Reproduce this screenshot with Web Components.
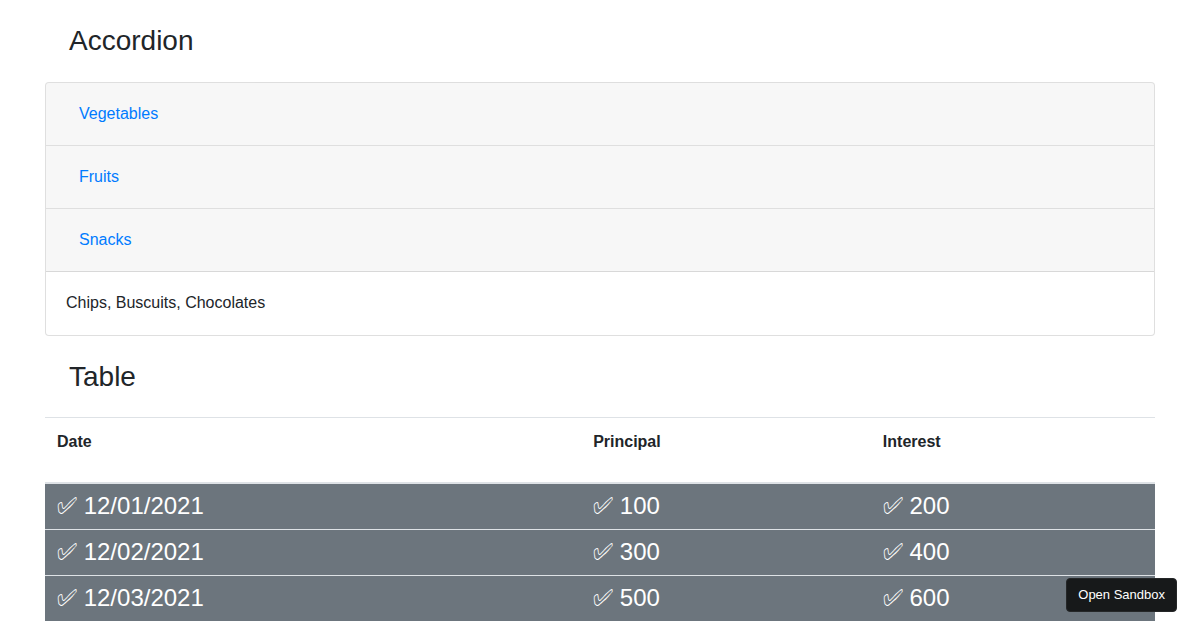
<!DOCTYPE html>
<html lang="en">
<head>
<meta charset="utf-8">
<meta name="viewport" content="width=device-width, initial-scale=1">
<title>Accordion and Table</title>
<style>
  body {
    margin: 0;
    background: #fff;
    color: #212529;
    font: 16px/24px "Liberation Sans", Arial, "DejaVu Sans", sans-serif;
  }
</style>
</head>
<body>
<demo-page>
  <section-title>Accordion</section-title>
  <accordion-group>
    <accordion-card label="Vegetables">Tomato, Potato, Onion</accordion-card>
    <accordion-card label="Fruits">Apple, Mango, Orange</accordion-card>
    <accordion-card label="Snacks" open>Chips, Buscuits, Chocolates</accordion-card>
  </accordion-group>
  <section-title>Table</section-title>
  <payment-table></payment-table>
</demo-page>
<sandbox-button>Open Sandbox</sandbox-button>

<script>
  const attach = (el, html) => {
    el.attachShadow({ mode: "open" }).innerHTML = html;
    return el.shadowRoot;
  };

  customElements.define("demo-page", class extends HTMLElement {
    constructor() {
      super();
      attach(this, `
        <style>
          :host { display: block; box-sizing: border-box; max-width: 1140px; margin: 0 auto; padding: 0 15px; }
        </style>
        <main><slot></slot></main>`);
    }
  });

  customElements.define("section-title", class extends HTMLElement {
    constructor() {
      super();
      attach(this, `
        <style>
          :host { display: block; padding: 24px; }
          h3 { margin: 0; font-size: 28px; font-weight: 500; line-height: 1.2; }
        </style>
        <h3><slot></slot></h3>`);
    }
  });

  customElements.define("accordion-group", class extends HTMLElement {
    constructor() {
      super();
      attach(this, `
        <style>
          :host { display: block; }
          ::slotted(:first-child) { border-radius: 4px 4px 0 0; }
          ::slotted(:last-child) { border-radius: 0 0 4px 4px; }
        </style>
        <slot></slot>`);
    }
  });

  customElements.define("accordion-card", class extends HTMLElement {
    static observedAttributes = ["open"];
    constructor() {
      super();
      const root = attach(this, `
        <style>
          :host { display: block; overflow: hidden; border-width: 1px; border-style: solid; border-color: rgba(0,0,0,.125); background: #fff; }
          :host(:not(:last-child)) { border-bottom-width: 0; }
          header { padding: 12px 20px; margin-bottom: -1px; background: rgba(0,0,0,.03); border-bottom: 1px solid rgba(0,0,0,.125); }
          button { display: block; padding: 6px 12px; border: 1px solid transparent; background: none; color: #007bff; font: inherit; cursor: pointer; }
          button:hover { color: #0056b3; text-decoration: underline; }
          .body { padding: 20px; }
        </style>
        <header><button type="button" aria-controls="body"></button></header>
        <div class="body" id="body"><slot></slot></div>`);
      root.querySelector("button").addEventListener("click", () => {
        const wasOpen = this.hasAttribute("open");
        for (const card of this.parentElement.children) card.removeAttribute("open");
        this.toggleAttribute("open", !wasOpen);
      });
    }
    connectedCallback() {
      this.shadowRoot.querySelector("button").textContent = this.getAttribute("label");
      this.update();
    }
    attributeChangedCallback() { this.update(); }
    update() {
      const open = this.hasAttribute("open");
      this.shadowRoot.querySelector("button").setAttribute("aria-expanded", open);
      this.shadowRoot.querySelector(".body").hidden = !open;
    }
  });

  customElements.define("payment-table", class extends HTMLElement {
    constructor() {
      super();
      const rows = [["12/01/2021", 100, 200], ["12/02/2021", 300, 400], ["12/03/2021", 500, 600]];
      attach(this, `
        <style>
          :host { display: block; }
          table { width: 100%; border-collapse: collapse; table-layout: fixed; }
          th { box-sizing: border-box; padding: 12px 12px 28px; border-top: 1px solid #dee2e6; border-bottom: 2px solid #dee2e6; text-align: left; font-weight: 700; }
          th:nth-child(1) { width: 48.3%; }
          th:nth-child(2) { width: 26.1%; }
          tbody { background: #6c757d; color: #fff; }
          td { box-sizing: border-box; height: 46px; padding: 4px 12px; border-top: 1px solid #dee2e6; font-size: 24px; line-height: 36px; }
          .mark { font-family: "DejaVu Sans", sans-serif; font-variant-emoji: text; line-height: 1; }
        </style>
        <table>
          <thead><tr><th scope="col">Date</th><th scope="col">Principal</th><th scope="col">Interest</th></tr></thead>
          <tbody>${rows.map(r => `<tr>${r.map(c => `<td><span class="mark">✅&#xFE0E;</span> ${c}</td>`).join("")}</tr>`).join("")}</tbody>
        </table>`);
    }
  });

  customElements.define("sandbox-button", class extends HTMLElement {
    constructor() {
      super();
      attach(this, `
        <style>
          :host { display: block; position: fixed; right: 23px; bottom: 18px; }
          button { display: block; padding: 8px 11px; border: 1px solid #252728; border-radius: 4px; background: #17191a; color: #fff; font: 13px/16px "Liberation Sans", Arial, sans-serif; cursor: pointer; }
        </style>
        <button type="button"><slot></slot></button>`);
    }
  });
</script>
</body>
</html>
